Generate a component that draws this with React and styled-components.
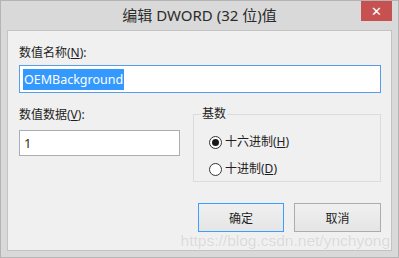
import styled, { createGlobalStyle } from "styled-components";

const Global = createGlobalStyle`
  html, body {
    margin: 0;
    padding: 0;
    background: #d9d9d9;
  }
  * { box-sizing: border-box; }
`;

const Window = styled.div`
  position: relative;
  width: 399px;
  height: 258px;
  background: #d9d9d9;
  border: 1px solid #b4b4b4;
  font-family: "Noto Sans", "Noto Sans CJK SC", sans-serif;
  color: #1e1e1e;
  display: flex;
  flex-direction: column;
  overflow: hidden;
`;

const TitleBar = styled.div`
  height: 29px;
  display: grid;
  grid-template-columns: 1fr auto 1fr;
  align-items: start;
`;

const Title = styled.div`
  grid-column: 2;
  font-size: 15px;
  line-height: 29px;
  color: #2b2b2b;
`;

const Close = styled.div`
  grid-column: 3;
  justify-self: end;
  margin-right: 6px;
  width: 31px;
  height: 20px;
  background: #c75050;
  color: #fff;
  display: flex;
  align-items: center;
  justify-content: center;
  font-family: "DejaVu Sans", sans-serif;
  font-size: 13px;
  font-weight: bold;
`;

const Client = styled.div`
  margin: 0 6px 6px 6px;
  flex: 1;
  background: #f0f0f0;
  border: 1px solid #c3c3c3;
  padding: 14px 10px 0 11px;
  font-size: 12px;
`;

const Label = styled.div`
  font-size: 12px;
  line-height: 16px;
  margin-bottom: ${(p) => p.gap || 8}px;
`;

const U = styled.span`
  text-decoration: underline;
`;

const TextBox = styled.div`
  height: ${(p) => p.h || 27}px;
  width: ${(p) => (p.w ? `${p.w}px` : "100%")};
  background: #fff;
  border: 1px solid ${(p) => (p.focused ? "#569de5" : "#abadb3")};
  display: flex;
  align-items: center;
  padding-left: 3px;
  font-size: 13px;
`;

const Selected = styled.span`
  background: #3399ff;
  color: #fff;
  padding: 1px 1px;
  line-height: 19px;
  font-size: 12.5px;
`;

const Value = styled.span`
  padding-left: 1px;
  color: #3a2a10;
`;

const Lower = styled.div`
  display: flex;
  justify-content: space-between;
  margin-top: 14px;
`;

const Column = styled.div`
  display: flex;
  flex-direction: column;
`;

const Group = styled.fieldset`
  margin: 0;
  width: 188px;
  height: 75px;
  border: 1px solid #dcdcdc;
  padding: 12px 0 0 15px;
  display: flex;
  flex-direction: column;
  gap: 9px;
`;

const Legend = styled.legend`
  padding: 0 1px;
  margin-left: -8px;
  font-size: 12px;
  line-height: 14px;
`;

const Option = styled.label`
  display: flex;
  align-items: center;
  gap: 3px;
  font-size: 12px;
  line-height: 18px;
`;

const Radio = styled.span`
  width: 13px;
  height: 13px;
  border-radius: 50%;
  border: 1px solid #333;
  background: #fff;
  display: flex;
  align-items: center;
  justify-content: center;
  &::after {
    content: "";
    width: 7px;
    height: 7px;
    border-radius: 50%;
    background: ${(p) => (p.checked ? "#1a1a1a" : "transparent")};
  }
`;

const Buttons = styled.div`
  display: flex;
  justify-content: flex-end;
  gap: 10px;
  margin-top: 21px;
`;

const Button = styled.div`
  width: ${(p) => p.w}px;
  height: 29px;
  border: 1px solid ${(p) => (p.primary ? "#3c9fff" : "#acacac")};
  background: linear-gradient(#f0f0f0, #e5e5e5);
  display: flex;
  align-items: center;
  justify-content: center;
  font-size: 12px;
`;

const Watermark = styled.div`
  position: absolute;
  right: 8px;
  bottom: 7px;
  font-family: "Liberation Sans", sans-serif;
  font-size: 15.5px;
  color: rgba(195, 195, 195, 0.6);
  text-shadow: 0 0 1px rgba(255, 255, 255, 0.9);
  pointer-events: none;
`;

export default function App() {
  return (
    <>
      <Global />
      <Window>
        <TitleBar>
          <Title>编辑 DWORD (32 位)值</Title>
          <Close>✕</Close>
        </TitleBar>
        <Client>
          <Label gap={4}>
            数值名称(<U>N</U>):
          </Label>
          <TextBox focused h={28}>
            <Selected>OEMBackground</Selected>
          </TextBox>
          <Lower>
            <Column>
              <Label gap={7}>
                数值数据(<U>V</U>):
              </Label>
              <TextBox w={161} h={26}>
                <Value>1</Value>
              </TextBox>
            </Column>
            <Group>
              <Legend>基数</Legend>
              <Option>
                <Radio checked />
                <span>
                  十六进制(<U>H</U>)
                </span>
              </Option>
              <Option>
                <Radio />
                <span>
                  十进制(<U>D</U>)
                </span>
              </Option>
            </Group>
          </Lower>
          <Buttons>
            <Button primary w={86}>确定</Button>
            <Button w={87}>取消</Button>
          </Buttons>
        </Client>
        <Watermark>https://blog.csdn.net/ynchyong</Watermark>
      </Window>
    </>
  );
}
